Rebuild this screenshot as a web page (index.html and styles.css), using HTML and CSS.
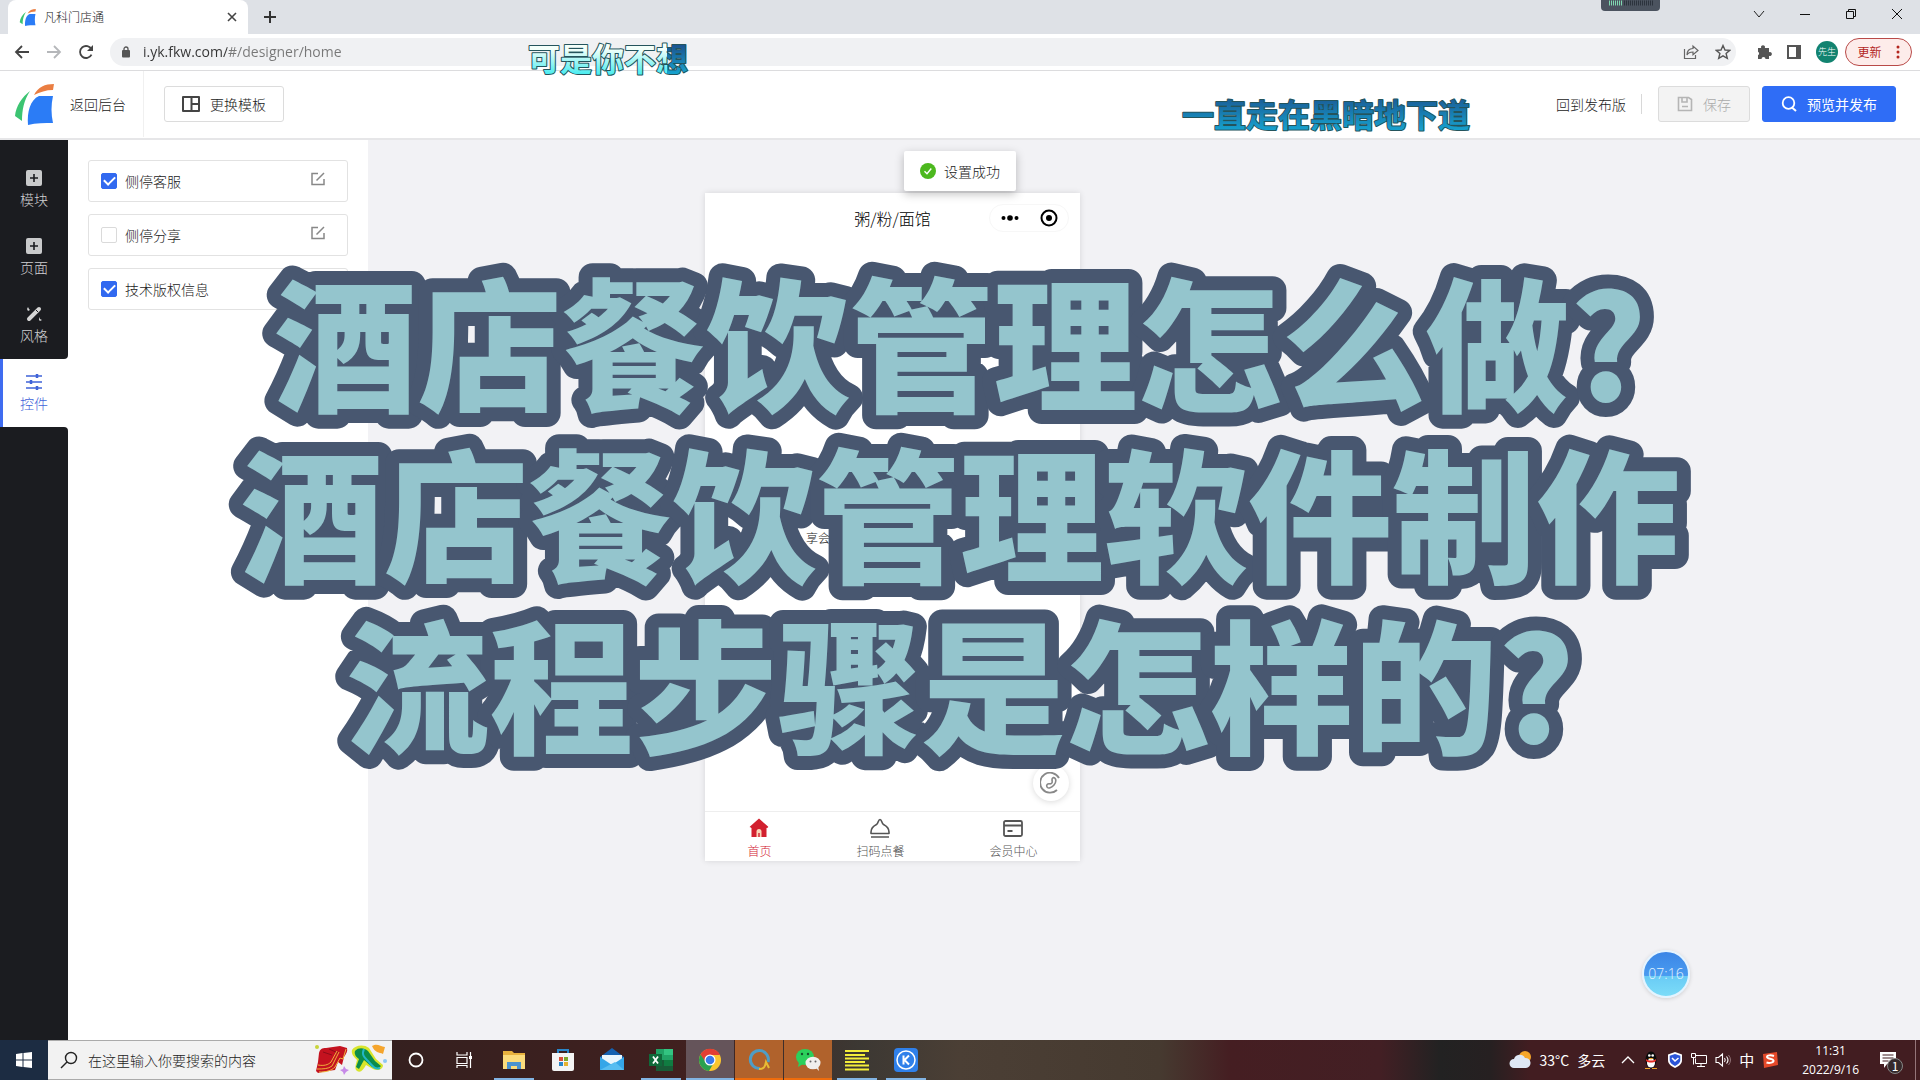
FILE: index.html
```html
<!DOCTYPE html>
<html lang="zh-CN">
<head>
  <meta charset="UTF-8">
  <meta name="viewport" content="width=device-width, initial-scale=1.0">
  <title>凡科门店通</title>
  <link rel="stylesheet" href="styles.css">
</head>
<body>

  <!-- Shared logo -->
  <svg width="0" height="0" class="defs" aria-hidden="true">
    <symbol id="logo" viewBox="0 0 40 41">
      <path fill="#3cc472" d="M15 7C7 13 1 22 0 32l7 5c0-11 2-21 8-30z"/>
      <path fill="#2b7cf6" d="M13 41c-1-13 2-25 11-29h14c-2 9-2 18 0 27-8 0-17 0-25 2z"/>
      <path fill="#ea7e42" d="M19 11C23 3 30 0 39 0l-1 6c-7 0-13 2-19 5z"/>
    </symbol>
  </svg>

  <!-- Browser tabs -->
  <div class="tab-strip">
    <div class="tab">
      <svg class="favicon" width="18" height="17"><use href="#logo"/></svg>
      <span>凡科门店通</span>
      <button class="icon-btn tab-close" aria-label="关闭标签页"><svg width="10" height="10" viewBox="0 0 10 10"><path d="M1 1l8 8M9 1l-8 8" stroke="#444" stroke-width="1.6"/></svg></button>
    </div>
    <button class="icon-btn tab-add" aria-label="新标签页"><svg width="12" height="12" viewBox="0 0 12 12"><path d="M6 0v12M0 6h12" stroke="#333" stroke-width="2"/></svg></button>
    <div class="meter">
      <svg width="46" height="6" viewBox="0 0 46 6"><path d="M1 3h13" stroke="#7fd8b0" stroke-width="5" stroke-dasharray="1 1"/><path d="M16 3h29" stroke="#2c333d" stroke-width="5" stroke-dasharray="1 1"/></svg>
    </div>
    <div class="window-buttons">
      <button class="icon-btn" aria-label="搜索标签页"><svg width="12" height="12" viewBox="0 0 12 12"><path d="M1 3l5 6 5-6" fill="none" stroke="#222"/></svg></button>
      <button class="icon-btn" aria-label="最小化"><svg width="12" height="12" viewBox="0 0 12 12"><path d="M1 6.500h10" stroke="#111"/></svg></button>
      <button class="icon-btn" aria-label="还原"><svg width="12" height="12" viewBox="0 0 12 12"><path d="M1.500 3.500h7v7h-7zM3.500 3.500v-2h7v7h-2" fill="none" stroke="#111"/></svg></button>
      <button class="icon-btn" aria-label="关闭"><svg width="12" height="12" viewBox="0 0 12 12"><path d="M1 1l10 10M11 1L1 11" stroke="#111"/></svg></button>
    </div>
  </div>

  <!-- Browser toolbar -->
  <div class="toolbar">
    <button class="icon-btn" aria-label="后退"><svg width="16" height="16" viewBox="0 0 16 16"><path d="M15 8H2M8 2L2 8l6 6" fill="none" stroke="#444" stroke-width="1.800"/></svg></button>
    <button class="icon-btn" aria-label="前进"><svg width="16" height="16" viewBox="0 0 16 16"><path d="M1 8h13M8 2l6 6-6 6" fill="none" stroke="#b5b7ba" stroke-width="1.800"/></svg></button>
    <button class="icon-btn" aria-label="刷新"><svg width="16" height="16" viewBox="0 0 16 16"><path d="M13.500 10.500a6 6 0 1 1 0-5" fill="none" stroke="#444" stroke-width="1.800"/><path d="M15 1v6H9z" fill="#444"/></svg></button>
    <div class="address">
      <svg width="10" height="12" viewBox="0 0 10 12"><rect x="1" y="4" width="8" height="7.500" rx="1" fill="#555"/><path d="M3 5V3a2 2 0 0 1 4 0v2" fill="none" stroke="#555" stroke-width="1.300"/></svg>
      <input type="text" class="url" aria-label="地址" value="i.yk.fkw.com/#/designer/home">
      <button class="icon-btn" aria-label="分享"><svg width="16" height="16" viewBox="0 0 16 16"><path d="M1.500 5v9.500h11V11M4 11c0-4 2-6.500 6-6.500V2l5 4.500-5 4.300V8C7 8 5 9 4 11z" fill="none" stroke="#666" stroke-width="1.200"/></svg></button>
      <button class="icon-btn star" aria-label="收藏"><svg width="16" height="16" viewBox="0 0 16 16"><path d="M8 1.500l2 4.500 4.800.4-3.700 3.100 1.200 4.800L8 11.800l-4.300 2.500 1.200-4.800L1.200 6.400 6 6z" fill="none" stroke="#555" stroke-width="1.400"/></svg></button>
    </div>
    <div class="toolbar-end">
      <button class="icon-btn" aria-label="扩展程序"><svg width="16" height="16" viewBox="0 0 16 16"><path fill="#555" d="M2 4h3.200a2 2 0 1 1 3.600 0H13v4.200a2 2 0 1 1 0 3.600V15H9.500a2 2 0 0 0-4 0H2v-3.700a2 2 0 0 0 0-3.600z"/></svg></button>
      <button class="icon-btn" aria-label="侧边栏"><svg width="14" height="14" viewBox="0 0 14 14"><path d="M1 1h12v12H1z" fill="none" stroke="#555" stroke-width="2"/><path d="M9 1h4v12H9z" fill="#555"/></svg></button>
      <button class="avatar">先生</button>
      <button class="update">更新<svg width="4" height="14" viewBox="0 0 4 14" fill="#b3261e"><circle cx="2" cy="2" r="1.500"/><circle cx="2" cy="7" r="1.500"/><circle cx="2" cy="12" r="1.500"/></svg></button>
    </div>
  </div>

  <!-- App header -->
  <header class="header">
    <a href="#" class="back"><svg width="40" height="41"><use href="#logo"/></svg>返回后台</a>
    <button class="btn template-btn">
      <svg width="18" height="16" viewBox="0 0 18 16"><path d="M1 1h16v14H1zM9.500 1v14M9.500 8H17" fill="none" stroke="#444" stroke-width="2" stroke-linejoin="round"/></svg>
      更换模板
    </button>
    <div class="header-end">
      <a href="#" class="old-version">回到发布版</a>
      <button class="btn save-btn" disabled>
        <svg width="16" height="16" viewBox="0 0 16 16"><path d="M1.500 1.500h10l3 2v11h-13zM5 2v4h5V2M5 10.500h6" fill="none" stroke="#b5b5b5" stroke-width="1.600"/></svg>
        保存
      </button>
      <button class="btn publish-btn">
        <svg width="16" height="16" viewBox="0 0 16 16"><circle cx="7.500" cy="7" r="5.800" fill="none" stroke="#fff" stroke-width="1.800"/><path d="M11 11.500l4 3.500" stroke="#fff" stroke-width="2"/></svg>
        预览并发布
      </button>
    </div>
  </header>

  <main class="main">
    <nav class="side-nav">
      <button class="nav-item">
        <svg width="18" height="16" viewBox="0 0 18 16"><rect x="1" width="16" height="16" rx="2" fill="#c9cacb"/><path d="M9 4v8M5 8h8" stroke="#1b1c20" stroke-width="1.600"/></svg>
        模块
      </button>
      <button class="nav-item">
        <svg width="18" height="16" viewBox="0 0 18 16"><rect x="1" width="16" height="16" rx="2" fill="#c9cacb"/><path d="M9 4v8M5 8h8" stroke="#1b1c20" stroke-width="1.600"/></svg>
        页面
      </button>
      <button class="nav-item before-active">
        <svg width="18" height="16" viewBox="0 0 18 16"><path d="M4 13L14 3" stroke="#d5d5d5" stroke-width="4" stroke-linecap="round"/><path d="M11 4l2 2" stroke="#1b1c20"/><path d="M3 1l1 2 1 1-2 1-1-2zM14 11l1 2 2 1-2 1-1-1z" fill="#d5d5d5"/></svg>
        风格
      </button>
      <button class="nav-item active">
        <svg width="18" height="16" viewBox="0 0 18 16"><path d="M1 2h16M1 8h16M1 14h16" stroke="#3f63d8" stroke-width="1.600"/><path d="M12 0v4M6 6v4M12 12v4" stroke="#3f63d8" stroke-width="2.500"/></svg>
        控件
      </button>
      <div class="nav-rest"></div>
    </nav>

    <aside class="panel">
      <div class="option">
        <label><input type="checkbox" checked>侧停客服</label>
        <button class="icon-btn edit" aria-label="编辑"><svg width="14" height="14" viewBox="0 0 14 14"><path d="M7 1.500H1v11h12V7M5.500 8.500L13 1" fill="none" stroke="#888" stroke-width="1.500"/></svg></button>
      </div>
      <div class="option">
        <label><input type="checkbox">侧停分享</label>
        <button class="icon-btn edit" aria-label="编辑"><svg width="14" height="14" viewBox="0 0 14 14"><path d="M7 1.500H1v11h12V7M5.500 8.500L13 1" fill="none" stroke="#888" stroke-width="1.500"/></svg></button>
      </div>
      <div class="option">
        <label><input type="checkbox" checked>技术版权信息</label>
      </div>
    </aside>

    <section class="canvas">
      <div class="phone">
        <div class="phone-head">
          <span class="phone-title">粥/粉/面馆</span>
          <div class="capsule">
            <svg width="18" height="6" viewBox="0 0 18 6"><circle cx="2.500" cy="3" r="2"/><circle cx="9" cy="3" r="2.800"/><circle cx="15.500" cy="3" r="2"/></svg>
            <svg width="18" height="18" viewBox="0 0 18 18"><circle cx="9" cy="9" r="7.500" fill="none" stroke="#000" stroke-width="2"/><circle cx="9" cy="9" r="3"/></svg>
          </div>
        </div>
        <div class="phone-body">
          <p class="member">享会员</p>
          <button class="service" aria-label="客服"><svg width="22" height="22" viewBox="0 0 22 22"><path d="M19 6a10 10 0 1 0-2 12" fill="none" stroke="#888" stroke-width="1.800"/><path d="M13.500 5.500c3.500 1 2.500 5 .5 7.500s-6 4-7 2 .5-3.500 2.500-3.200c1.500.2 3-.8 2.700-2.300-.5-2 0-3.500 1.300-4z" fill="none" stroke="#888" stroke-width="1.600"/></svg></button>
        </div>
        <div class="phone-tabs">
          <a href="#" class="phone-tab current">
            <svg width="20" height="20" viewBox="0 0 20 20"><path d="M10 0.500l9 8c.6.800 0 1.500-1.500 1.500v9h-15v-9C1 10 .4 9.300 1 8.500z" fill="#d2202f"/><path d="M7.500 19v-5.500a2.500 2.500 0 0 1 5 0V19z" fill="#fbd5b8"/><path d="M9.300 19v-4h1.400v4z" fill="#d2202f"/></svg>
            首页
          </a>
          <a href="#" class="phone-tab">
            <svg width="20" height="20" viewBox="0 0 20 20"><path d="M1 15.500V14c0-4 2.500-6 5.500-7.500C8.500 5.500 8 1.500 10 1.500s1.500 4 3.500 5C16.500 8 19 10 19 14v1.500zM1 19h18" fill="none" stroke="#555" stroke-width="1.600" stroke-linejoin="round"/></svg>
            扫码点餐
          </a>
          <a href="#" class="phone-tab">
            <svg width="20" height="20" viewBox="0 0 20 20"><rect x="1" y="3" width="18" height="15" rx="1.500" fill="none" stroke="#555" stroke-width="1.800"/><path d="M1 7.500h18M4.500 13h5" stroke="#555" stroke-width="1.800"/></svg>
            会员中心
          </a>
        </div>
      </div>
    </section>
  </main>

  <!-- Windows taskbar -->
  <footer class="taskbar">
    <button class="start" aria-label="开始"><svg width="16" height="16" viewBox="0 0 16 16" fill="#fff"><path d="M0 2l6.500-1v6.500H0zM7.500 1L16 0v7.500H7.500zM0 8.500h6.500V15L0 14zM7.500 8.500H16V16l-8.500-1z"/></svg></button>
    <label class="search">
      <svg width="18" height="18" viewBox="0 0 18 18"><circle cx="11" cy="7" r="5.500" fill="none" stroke="#222" stroke-width="1.400"/><path d="M7 11l-6 6" stroke="#222" stroke-width="1.400"/></svg>
      <input type="text" placeholder="在这里输入你要搜索的内容" aria-label="搜索">
      <svg width="74" height="32" viewBox="0 0 74 32">
        <path d="M5 9c1-4 3-5 7-5l14-2 7 2c1 3-1 6-3 9l-2 8-4-3-3 8-8 1-9 2-2-2 2-9z" fill="#c4121f"/>
        <path d="M9 8l9 3M15 5l9 4" stroke="#8d0b18" stroke-width="1"/>
        <path d="M3 25c6 0 11 0 15-3l7-14M4 21c6 1 10 0 13-3l6-11M5 28c7 0 12-1 16-5l5-9 3 1 3-10" fill="none" stroke="#f0b13a" stroke-width="1"/>
        <path d="M30 22l2 3 3 1-3 2-2 3-1-3-3-2 3-1z" fill="#c78ae8"/>
        <circle cx="3" cy="3" r="2" fill="#c8d43a"/>
        <path d="M38 6c3-5 12-6 17-2l7 11 7 6c0 5-6 6-10 4l-7-4c-3 5-5 8-9 6-3-2-1-7 0-11-3-3-6-6-5-10z" fill="#d8e52c"/>
        <path d="M41 7c4-4 9-3 13 0l7 10 6 5c-2 3-6 2-9 1l-8-7-5 9-3-2 3-8c-3-2-5-5-4-8z" fill="#0b8d4b"/>
        <path d="M50 5c-3 6 1 9 4 12 4 4 6 9 12 7" fill="none" stroke="#22b6c9" stroke-width="2"/>
        <path d="M58 2c5-3 8 0 13 1l-2 7c-4-2-8-1-11-8z" fill="#f5a52c"/>
        <circle cx="71" cy="17" r="2" fill="#8cc7f5"/>
      </svg>
    </label>
    <div class="apps">
      <button class="app" aria-label="Cortana"><svg width="24" height="24" viewBox="0 0 24 24"><circle cx="12" cy="12" r="6.500" fill="none" stroke="#fff" stroke-width="1.800"/></svg></button>
      <button class="app" aria-label="任务视图"><svg width="24" height="24" viewBox="0 0 24 24"><path d="M4 4v3h10V4M4 9.500h10v6H4zM4 20v-2.500h10V20M17.500 4v16" fill="none" stroke="#fff" stroke-width="1.200"/><path d="M16 8h3v3h-3z" fill="#fff"/></svg></button>
      <button class="app open" aria-label="文件资源管理器"><svg width="24" height="24" viewBox="0 0 24 24"><path d="M1 3h9l2 2h11v16H1z" fill="#e8b23e"/><path d="M1 7h22v14H1z" fill="#fbdc7c"/><path d="M5 21v-7h14v7h-4v-3H9v3z" fill="#4b93cf"/></svg></button>
      <button class="app" aria-label="应用商店"><svg width="24" height="24" viewBox="0 0 24 24"><path d="M7 6V2h10v4" fill="none" stroke="#2a86c8" stroke-width="2"/><path d="M1 5h22v16q0 2-2 2H3q-2 0-2-2z" fill="#f4f4f4"/><path d="M8 9h4v4H8z" fill="#d9503a"/><path d="M13 9h4v4h-4z" fill="#7ca82c"/><path d="M8 14h4v4H8z" fill="#2a86c8"/><path d="M13 14h4v4h-4z" fill="#e7b22e"/></svg></button>
      <button class="app" aria-label="邮件"><svg width="24" height="24" viewBox="0 0 24 24"><path d="M0 9l12-9 12 9v13H0z" fill="#1561b0"/><path d="M2 7h20v9H2z" fill="#eaf6fd"/><path d="M0 9l12 8 12-8v13H0z" fill="#35a6e8"/><path d="M0 22l15-8 9 8z" fill="#57bdf1"/></svg></button>
      <button class="app open" aria-label="Excel"><svg width="24" height="24" viewBox="0 0 24 24"><path d="M7 1h17v22H7z" fill="#21a366"/><path d="M7 12h17v11H7z" fill="#185c37"/><path d="M15 1h9v6h-9z" fill="#33c481"/><path d="M15 12h9v6h-9z" fill="#107c41"/><path d="M0 6h13v12H0z" fill="#0f6a3a"/><path d="M4 8.500l5 7M9 8.500l-5 7" stroke="#fff" stroke-width="1.800"/></svg></button>
      <button class="app open chrome" aria-label="Chrome"><svg width="24" height="24" viewBox="0 0 24 24"><circle cx="12" cy="12" r="11" fill="#fbc62f"/><path d="M2.500 6.500A11 11 0 0 1 22 7H12l-5 8z" fill="#e23f33"/><path d="M2.500 6.500A11 11 0 0 0 11 23l5-8.500H8z" fill="#2aa050"/><circle cx="12" cy="12" r="5.500" fill="#fff"/><circle cx="12" cy="12" r="4.300" fill="#3b79ea"/></svg></button>
      <button class="app alert" aria-label="浏览器"><svg width="24" height="24" viewBox="0 0 24 24"><path d="M13 20.500A9 9 0 1 1 21 14" fill="none" stroke="#4f9dc4" stroke-width="3"/><path d="M12 21c5 0 6-2 7-7l3 6" fill="none" stroke="#e8bb35" stroke-width="2"/></svg></button>
      <button class="app alert" aria-label="微信"><svg width="26" height="24" viewBox="0 0 26 24"><ellipse cx="10" cy="9" rx="9" ry="8" fill="#2bd05c"/><path d="M4 14l-1 5 5-3z" fill="#2bd05c"/><circle cx="7" cy="6" r="1.200" fill="#14512a"/><circle cx="13" cy="6" r="1.200" fill="#14512a"/><ellipse cx="18" cy="15" rx="7.500" ry="6.300" fill="#f0efec"/><path d="M21 20l3 3-1-5z" fill="#f0efec"/><circle cx="15.500" cy="13.500" r="1" fill="#666"/><circle cx="20.500" cy="13.500" r="1" fill="#666"/></svg></button>
      <button class="app open" aria-label="便笺"><svg width="24" height="24" viewBox="0 0 24 24"><path d="M0 3h24M0 7h20M0 10.500h24M0 14h20M0 17.500h24M0 21.500h24" stroke="#f4ee3a" stroke-width="2"/></svg></button>
      <button class="app open" aria-label="K"><svg width="24" height="24" viewBox="0 0 24 24"><rect width="24" height="24" rx="4" fill="#2f80ea"/><circle cx="12" cy="12" r="9" fill="none" stroke="#fff" stroke-width="1.500"/><path d="M9.500 7.500v9M15 7.500L10.500 12l4.500 4.500" fill="none" stroke="#fff" stroke-width="2"/></svg></button>
    </div>
    <div class="tray">
      <button class="weather">
        <svg width="22" height="18" viewBox="0 0 22 18"><circle cx="16" cy="6" r="6" fill="#f6a62a"/><path d="M5 17a4.500 4.500 0 0 1 0-9 6 6 0 0 1 11-1 5 5 0 0 1 1 10z" fill="#dfe8f5"/></svg>
        <span>33°C</span><span>多云</span>
      </button>
      <button class="icon-btn" aria-label="显示隐藏的图标"><svg width="14" height="8" viewBox="0 0 14 8"><path d="M1 7l6-6 6 6" fill="none" stroke="#fff" stroke-width="1.300"/></svg></button>
      <button class="icon-btn" aria-label="QQ"><svg width="16" height="18" viewBox="0 0 16 18"><ellipse cx="8" cy="9" rx="5.500" ry="8.500" fill="#0b0b0b"/><ellipse cx="8" cy="12" rx="4" ry="4.500" fill="#fff"/><path d="M3 8c3 2 7 2 10 0v2c-3 2-7 2-10 0z" fill="#e22b24"/><circle cx="6.300" cy="4.500" r="1.300" fill="#fff"/><circle cx="9.700" cy="4.500" r="1.300" fill="#fff"/><path d="M5 7h6l-3 1.500zM2 17h5v1H2zM9 17h5v1H9z" fill="#f0a62a"/></svg></button>
      <button class="icon-btn" aria-label="安全"><svg width="16" height="16" viewBox="0 0 16 16"><path d="M8 0l7 2.500V8c0 4-3 6-7 8-4-2-7-4-7-8V2.500z" fill="#fff"/><path d="M8 2l5.300 1.800V8c0 3-2.300 4.500-5.300 6-3-1.500-5.300-3-5.300-6V3.800z" fill="#2b55d8"/><path d="M5 6l3 3 3.500-3" fill="none" stroke="#fff" stroke-width="1.500"/></svg></button>
      <button class="icon-btn" aria-label="网络"><svg width="16" height="16" viewBox="0 0 16 16"><path d="M4 3.500h11.500v8H4.500v-5M10 11.500v3M6 14.500h8M.5 1.500h4v4h-4zM2.500 5.500v7" fill="none" stroke="#fff"/></svg></button>
      <button class="icon-btn" aria-label="音量"><svg width="16" height="16" viewBox="0 0 16 16"><path d="M1 5.500h2.500l4-3.500v12l-4-3.500H1zM9.500 6q1.500 2 0 4M11.500 4.500q3 3.500 0 7" fill="none" stroke="#fff" stroke-width="1.100"/><path d="M13.500 3q4 5 0 10" fill="none" stroke="#947579"/></svg></button>
      <button class="icon-btn ime">中</button>
      <button class="icon-btn" aria-label="输入法"><svg width="16" height="16" viewBox="0 0 16 16"><path d="M1 2l14-2 1 13-14 3z" fill="#e5492a"/><path d="M12 4c-3-1-7-1-7 1s6 1.500 6.500 3.500-4 3-7 2" fill="none" stroke="#fff" stroke-width="2"/></svg></button>
      <div class="clock"><span>11:31</span><span>2022/9/16</span></div>
      <button class="icon-btn notify" aria-label="通知">
        <svg width="18" height="18" viewBox="0 0 18 18"><path d="M1 1h16v12H8l-3 4v-4H1z" fill="#fff"/><path d="M3.500 4h11M3.500 7h11M3.500 10h6" stroke="#401c20" stroke-width="1.200"/></svg>
        <span class="badge">1</span>
      </button>
      <span class="show-desktop"></span>
    </div>
  </footer>

  <!-- Toast, pointer and recording timer float over the page -->
  <div class="toast" role="status">
    <svg width="16" height="16" viewBox="0 0 16 16"><circle cx="8" cy="8" r="8" fill="#4cb81e"/><path d="M4.500 8.200L7 10.700l4.300-5.200" fill="none" stroke="#fff" stroke-width="1.400"/></svg>
    设置成功
  </div>
  <svg class="pointer" width="12" height="18" viewBox="0 0 12 18"><path d="M.5.5v15l3.500-3 2.500 5 2-1-2.500-5h5z" fill="#fff" stroke="#333"/></svg>
  <div class="timer">07:16</div>

  <!-- Captions -->
  <svg class="captions" width="100%" height="100%">
    <defs>
      <linearGradient id="mint" x1="0" y1="0" x2="0" y2="1"><stop offset=".2" stop-color="#f4fffa"/><stop offset="1" stop-color="#2fe9ee"/></linearGradient>
      <linearGradient id="ocean" x1="0" y1="0" x2="0" y2="1"><stop offset=".1" stop-color="#1b5591"/><stop offset="1" stop-color="#15aed8"/></linearGradient>
      <pattern id="sung" patternUnits="userSpaceOnUse" x="500" y="42" width="300" height="36">
        <rect width="167" height="36" fill="url(#mint)"/>
        <rect x="167" width="133" height="36" fill="url(#ocean)"/>
      </pattern>
    </defs>
    <text class="lyric" x="528" y="71" fill="url(#sung)">可是你不想</text>
    <text class="lyric" x="1182" y="127" fill="url(#ocean)">一直走在黑暗地下道</text>
    <text class="headline" x="50%" y="401">酒店餐饮管理怎么做?</text>
    <text class="headline" x="50%" y="572">酒店餐饮管理软件制作</text>
    <text class="headline" x="50%" y="743">流程步骤是怎样的?</text>
  </svg>

</body>
</html>
```
FILE: styles.css
```css
* {
  box-sizing: border-box;
}
body {
  margin: 0;
  min-height: 100vh;
  display: flex;
  flex-direction: column;
  position: relative;
  font-family: "Noto Sans CJK SC", sans-serif;
  font-weight: 300;
  font-size: 14px;
  line-height: 20px;
  color: #222;
  background: #fff;
}
button, input {
  font: inherit;
  color: inherit;
}
button {
  border: 0;
  padding: 0;
  background: none;
  cursor: pointer;
}
a {
  color: inherit;
  text-decoration: none;
}
svg {
  flex: none;
}
.defs {
  position: absolute;
}
.icon-btn {
  display: flex;
  align-items: center;
  justify-content: center;
}

/* Browser tabs */
.tab-strip {
  height: 34px;
  display: flex;
  padding-left: 8px;
  background: #dee1e6;
}
.tab {
  width: 240px;
  display: flex;
  align-items: center;
  gap: 7px;
  padding: 0 11px;
  background: #fff;
  border-radius: 8px 8px 0 0;
  font-size: 12px;
}
.tab-close {
  margin-left: auto;
}
.tab-add {
  width: 44px;
}
.meter {
  width: 59px;
  height: 11px;
  margin-left: auto;
  display: flex;
  justify-content: center;
  background: #4b535f;
  border-radius: 0 0 4px 4px;
}
.window-buttons {
  display: flex;
  margin-left: 76px;
  height: 28px;
}
.window-buttons .icon-btn {
  width: 46px;
}

/* Browser toolbar */
.toolbar {
  height: 37px;
  display: flex;
  align-items: center;
  gap: 16px;
  padding: 0 8px 0 14px;
  border-bottom: 1px solid #dcdcde;
}
.address {
  flex: 1;
  height: 28px;
  display: flex;
  align-items: center;
  gap: 12px;
  padding: 0 5px 0 11px;
  background: #f0f1f3;
  border-radius: 14px;
}
.star {
  margin-left: 4px;
}
.url {
  flex: 1;
  border: 0;
  padding: 0;
  outline: 0;
  font-family: "Open Sans", sans-serif;
  font-weight: 400;
  color: transparent;
  background: linear-gradient(to right, #333 84px, #777 84px);
  -webkit-background-clip: text;
  background-clip: text;
}
.toolbar-end {
  display: flex;
  align-items: center;
  gap: 15px;
  padding-left: 4px;
}
.avatar {
  width: 22px;
  height: 22px;
  border-radius: 50%;
  background: #128370;
  color: #fff;
  font-size: 9px;
}
.update {
  width: 67px;
  height: 28px;
  display: flex;
  align-items: center;
  justify-content: center;
  gap: 14px;
  margin-left: -8px;
  border: 1px solid #b94a48;
  border-radius: 14px;
  background: #fdecea;
  color: #b3261e;
  font-size: 12px;
  font-weight: 400;
}

/* App header */
.header {
  height: 69px;
  display: flex;
  align-items: center;
  padding-bottom: 1px;
  border-bottom: 2px solid #e6e6e8;
}
.back {
  width: 144px;
  height: 100%;
  display: flex;
  align-items: center;
  gap: 15px;
  padding-left: 15px;
  border-right: 1px solid #f0f0f0;
}
.btn {
  height: 36px;
  display: flex;
  align-items: center;
  justify-content: center;
  gap: 10px;
  border: 1px solid #dcdcdc;
  border-radius: 3px;
}
.template-btn {
  width: 120px;
  margin-left: 20px;
}
.header-end {
  display: flex;
  align-items: center;
  gap: 12px;
  margin-left: auto;
  padding-right: 24px;
}
.old-version {
  padding-right: 15px;
  margin-right: 4px;
  border-right: 1px solid #d8d8d8;
}
.save-btn {
  width: 92px;
  background: #f3f3f3;
  color: #aaa;
}
.publish-btn {
  width: 134px;
  background: #2f6df6;
  border-color: #2f6df6;
  color: #fff;
  font-weight: 400;
}

/* Designer */
.main {
  flex: 1;
  display: flex;
}
.side-nav {
  width: 68px;
  display: flex;
  flex-direction: column;
  background: #fff;
}
.side-nav::before {
  content: "";
  height: 15px;
  background: #1b1c20;
}
.nav-item {
  height: 68px;
  display: flex;
  flex-direction: column;
  align-items: center;
  justify-content: center;
  gap: 3px;
  background: #1b1c20;
  color: #d0d0d2;
}
.nav-item.before-active {
  border-bottom-right-radius: 4px;
}
.nav-item.active {
  background: #fff;
  color: #3f63d8;
  box-shadow: inset 3px 0 #3f6cf0;
}
.nav-rest {
  flex: 1;
  background: #1b1c20;
  border-top-right-radius: 4px;
}
.panel {
  width: 300px;
  display: flex;
  flex-direction: column;
  gap: 12px;
  padding: 20px;
  background: #fff;
}
.option {
  height: 42px;
  display: flex;
  align-items: center;
  justify-content: space-between;
  padding: 0 22px 0 12px;
  border: 1px solid #e2e2e2;
  border-radius: 3px;
}
.option label {
  display: flex;
  align-items: center;
  gap: 8px;
}
.option input {
  appearance: none;
  width: 16px;
  height: 16px;
  margin: 0;
  display: grid;
  place-items: center;
  border: 1px solid #dadada;
  border-radius: 2px;
}
.option input:checked {
  background: #3169f0;
  border-color: #3169f0;
}
.option input:checked::before {
  content: "";
  width: 9px;
  height: 5px;
  margin-bottom: 3px;
  border: solid #fff;
  border-width: 0 0 2px 2px;
  transform: rotate(-45deg);
}
.edit {
  padding-bottom: 4px;
}
.canvas {
  flex: 1;
  padding: 53px 337px;
  background: #f2f2f5;
}
.phone {
  width: 375px;
  height: 668px;
  display: flex;
  flex-direction: column;
  background: #fff;
  box-shadow: 0 0 6px rgba(0, 0, 0, 0.12);
}
.phone-head {
  height: 50px;
  display: grid;
  grid-template-columns: 1fr auto 1fr;
  align-items: center;
}
.phone-title {
  grid-column: 2;
  font-size: 16px;
  color: #000;
}
.capsule {
  width: 80px;
  height: 28px;
  display: flex;
  align-items: center;
  justify-content: space-around;
  justify-self: end;
  margin-right: 11px;
  border: 1px solid #f7f7f7;
  border-radius: 14px;
}
.phone-body {
  flex: 1;
  display: flex;
  flex-direction: column;
  justify-content: space-between;
}
.member {
  margin: 285px 0 0 101px;
  font-size: 12px;
}
.service {
  align-self: flex-end;
  width: 36px;
  height: 36px;
  display: grid;
  place-items: center;
  margin: 0 11px 10px;
  border-radius: 50%;
  background: #fff;
  box-shadow: 0 1px 6px rgba(0, 0, 0, 0.15);
}
.phone-tabs {
  height: 50px;
  display: flex;
  justify-content: space-around;
  border-top: 1px solid #eee;
}
.phone-tab {
  display: flex;
  flex-direction: column;
  align-items: center;
  gap: 4px;
  padding-top: 6px;
  font-size: 12px;
  line-height: 18px;
  color: #555;
}
.phone-tab.current {
  color: #d2202f;
}

/* Taskbar */
.taskbar {
  height: 40px;
  display: flex;
  color: #fff;
  background: linear-gradient(to right, #1c2c42 48px, #35201f 392px, #40201f 680px, #3c3833 860px, #4b3f35 960px, #463a30 1160px, #451e22 1230px, #431f24 1380px, #222 1440px, #262021 1490px, #421d21 1530px);
}
.start {
  width: 48px;
  padding-top: 4px;
}
.search {
  width: 344px;
  display: flex;
  align-items: center;
  gap: 10px;
  padding: 0 4px 0 12px;
  background: #f2f2f2;
  border: 1px solid #aaa;
  border-width: 1px 0;
  color: #222;
}
.search input {
  flex: 1;
  min-width: 0;
  border: 0;
  padding: 0;
  outline: 0;
  background: none;
}
.search input::placeholder {
  color: #222;
}
.apps {
  display: flex;
  gap: 1px;
}
.app {
  width: 48px;
  display: grid;
  place-items: center;
}
.app.open {
  background: linear-gradient(#82b4e3, #82b4e3) bottom / 40px 2px no-repeat;
}
.app.chrome {
  background: linear-gradient(to top, #82b4e3 2px, #65545a 2px);
}
.app.alert {
  background: linear-gradient(to top, #ef6c0c 2px, #b0622c 2px);
}
.tray {
  display: flex;
  align-items: center;
  gap: 8px;
  margin-left: auto;
  padding-right: 4px;
}
.weather {
  display: flex;
  align-items: center;
  gap: 8px;
  margin-right: 8px;
  font-size: 14px;
  font-weight: 400;
}
.ime {
  font-size: 15px;
  font-weight: 400;
}
.clock {
  display: flex;
  flex-direction: column;
  text-align: center;
  margin: 0 12px 0 16px;
  font-family: "Open Sans", sans-serif;
  font-weight: 400;
  font-size: 12px;
  line-height: 19px;
}
.notify {
  position: relative;
}
.show-desktop {
  align-self: stretch;
  margin-left: 10px;
  border-left: 1px solid #947579;
}
.badge {
  position: absolute;
  left: 8px;
  top: 7px;
  width: 16px;
  height: 16px;
  border: 1px solid #888;
  border-radius: 50%;
  background: #35292b;
  font-size: 12px;
  font-weight: 400;
  line-height: 14px;
}

/* Floating items */
.toast {
  position: absolute;
  top: 151px;
  left: 50%;
  transform: translateX(-50%);
  display: flex;
  align-items: center;
  gap: 8px;
  padding: 10px 16px;
  background: #fff;
  border-radius: 2px;
  box-shadow: 0 3px 10px rgba(0, 0, 0, 0.25);
}
.pointer {
  position: absolute;
  left: 652px;
  top: 618px;
}
.timer {
  position: absolute;
  right: 230px;
  bottom: 82px;
  width: 48px;
  height: 48px;
  border: 2px solid #e4f4ff;
  border-radius: 50%;
  background: linear-gradient(#3b86e6, #4a9cf0 55%, #69cbf5 55%, #7cdcf8);
  box-shadow: 0 1px 4px rgba(0, 0, 0, 0.15);
  color: #e4f4ff;
  font-family: "Open Sans", sans-serif;
  line-height: 44px;
  text-align: center;
}

/* Captions */
.captions {
  position: absolute;
  inset: 0;
  pointer-events: none;
}
.captions text {
  paint-order: stroke;
  stroke-linejoin: round;
}
.lyric {
  font-size: 32px;
  font-weight: 700;
  stroke: #24545c;
  stroke-width: 2px;
}
.headline {
  font-size: 144px;
  font-weight: 900;
  text-anchor: middle;
  fill: #94c5cd;
  stroke: #485770;
  stroke-width: 28px;
}
```
